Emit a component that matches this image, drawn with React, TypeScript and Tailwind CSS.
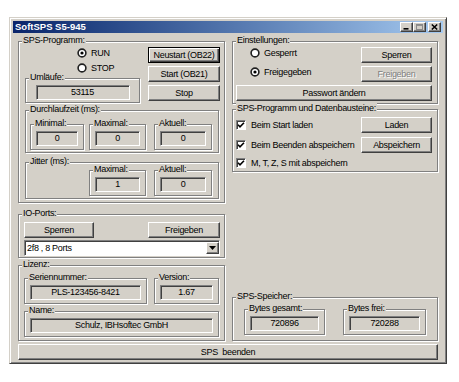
import React from "react";

const raised =
  "border border-t-white border-l-white border-r-[#404040] border-b-[#404040] shadow-[inset_-1px_-1px_0_#808080]";
const sunken =
  "border border-t-[#808080] border-l-[#808080] border-r-white border-b-white shadow-[inset_1px_1px_0_#404040]";

function Group({ label, className, children }: { label: string; className: string; children?: React.ReactNode }) {
  return (
    <div className={"border border-[#808080] shadow-[inset_1px_1px_0_#fff,1px_1px_0_#fff] " + className}>
      <div className="-mt-[7px] ml-[3px] w-fit whitespace-nowrap bg-[#d4d0c8] px-[1px] leading-[11px]">{label}</div>
      {children}
    </div>
  );
}

function Field({ value, className = "" }: { value: string; className?: string }) {
  return <div className={"h-[15px] text-center leading-[13px] " + sunken + " " + className}>{value}</div>;
}

function ValueBox({ label, value, className }: { label: string; value: string; className: string }) {
  return (
    <Group label={label} className={"h-[26px] " + className}>
      <Field value={value} className="mx-[5px] mt-[2px]" />
    </Group>
  );
}

function Btn({
  children,
  className = "",
  def,
  disabled,
}: {
  children: React.ReactNode;
  className?: string;
  def?: boolean;
  disabled?: boolean;
}) {
  const look = def
    ? "border border-black shadow-[inset_1px_1px_0_#fff,inset_-1px_-1px_0_#404040,inset_-2px_-2px_0_#808080]"
    : raised;
  return (
    <div
      className={
        "flex h-[16px] items-center justify-center whitespace-nowrap leading-[11px] " +
        look +
        " " +
        (disabled ? "text-[#808080] [text-shadow:1px_1px_0_#fff] " : "") +
        className
      }
    >
      {children}
    </div>
  );
}

function Radio({ checked, label }: { checked?: boolean; label: string }) {
  return (
    <div className="flex h-[14px] items-center gap-[4px]">
      <svg width="10" height="10" viewBox="0 0 10 10">
        <circle cx="5" cy="5" r="3.9" fill="#fff" stroke="#202020" strokeWidth="1.6" />
        {checked && <circle cx="5" cy="5" r="1.6" fill="#000" />}
      </svg>
      <span className="leading-[11px]">{label}</span>
    </div>
  );
}

function Check({ label, className = "" }: { label: string; className?: string }) {
  return (
    <div className={"flex items-center gap-[5px] " + className}>
      <div className={"flex h-[10px] w-[10px] items-center justify-center bg-white " + sunken}>
        <svg width="8" height="8" viewBox="0 0 8 8">
          <path d="M1 3.8 L3 5.8 L7 1.8" fill="none" stroke="#000" strokeWidth="1.6" />
        </svg>
      </div>
      <span className="whitespace-nowrap leading-[11px]">{label}</span>
    </div>
  );
}

function TitleBtn({ children, className = "" }: { children: React.ReactNode; className?: string }) {
  return (
    <div className={"flex h-[10px] w-[13px] items-center justify-center bg-[#d4d0c8] " + raised + " " + className}>
      {children}
    </div>
  );
}

export default function App() {
  return (
    <div className="h-[382px] w-[459px] bg-white pl-[9px] pt-[17px] font-['Liberation_Sans',Arial,sans-serif] text-[9px] tracking-[-0.3px] text-black">
      <div className="flex h-[347px] w-[438px] flex-col border border-t-[#d4d0c8] border-l-[#d4d0c8] border-r-[#404040] border-b-[#404040] bg-[#d4d0c8] p-[3px] shadow-[inset_1px_1px_0_#fff,inset_-1px_-1px_0_#808080]">
        {/* title bar */}
        <div className="flex h-[12px] items-center justify-between bg-linear-to-r from-[#0a246a] to-[#a6caf0] pl-[2px] pr-[2px]">
          <span className="text-[9.5px] font-bold leading-[12px] tracking-normal text-white">SoftSPS S5-945</span>
          <div className="flex items-center">
            <TitleBtn>
              <svg width="7" height="6" viewBox="0 0 7 6">
                <rect x="0.5" y="4" width="5" height="1.6" fill="#000" />
              </svg>
            </TitleBtn>
            <TitleBtn>
              <svg width="7" height="6" viewBox="0 0 7 6">
                <rect x="0.5" y="0.5" width="6" height="5" fill="none" stroke="#8a8a8a" strokeWidth="1" />
                <rect x="0.5" y="0.5" width="6" height="1.4" fill="#8a8a8a" />
              </svg>
            </TitleBtn>
            <TitleBtn className="ml-[2px]">
              <svg width="7" height="6" viewBox="0 0 7 6">
                <path d="M0.8 0.5 L6.2 5.5 M6.2 0.5 L0.8 5.5" stroke="#000" strokeWidth="1.5" />
              </svg>
            </TitleBtn>
          </div>
        </div>

        <div className="flex flex-1 flex-col px-[5px] pt-[8px]">
          <div className="flex gap-[7px]">
            {/* left column */}
            <div className="flex w-[207px] flex-col">
              <Group label="SPS-Programm:" className="h-[162px]">
                <div className="flex h-[57px] pl-[6px]">
                  <div className="flex w-[115px] flex-col">
                    <div className="pl-[52px]">
                      <Radio checked label="RUN" />
                      <div className="mt-[1px]">
                        <Radio label="STOP" />
                      </div>
                    </div>
                    <Group label="Umläufe:" className="mt-[3px] h-[25px]">
                      <Field value="53115" className="mx-auto mt-[2px] w-[94px]" />
                    </Group>
                  </div>
                  <div className="ml-[8px] flex w-[72px] flex-col gap-[3px] pt-[1px]">
                    <Btn def>Neustart (OB22)</Btn>
                    <Btn>Start (OB21)</Btn>
                    <Btn>Stop</Btn>
                  </div>
                </div>
                <Group label="Durchlaufzeit (ms):" className="ml-[6px] mt-[7px] h-[43px] w-[194px]">
                  <div className="mt-[9px] flex">
                    <ValueBox label="Minimal:" value="0" className="ml-[4px] w-[54px]" />
                    <ValueBox label="Maximal:" value="0" className="ml-[5px] w-[57px]" />
                    <ValueBox label="Aktuell:" value="0" className="ml-[8px] w-[58px]" />
                  </div>
                </Group>
                <Group label="Jitter (ms):" className="ml-[6px] mt-[9px] h-[37px] w-[194px]">
                  <div className="mt-[3px] flex">
                    <ValueBox label="Maximal:" value="1" className="ml-[63px] w-[57px]" />
                    <ValueBox label="Aktuell:" value="0" className="ml-[8px] w-[58px]" />
                  </div>
                </Group>
              </Group>

              <Group label="IO-Ports:" className="mt-[11px] h-[44px]">
                <div className="mt-[3px] flex justify-between pl-[5px] pr-[4px]">
                  <Btn className="w-[70px]">Sperren</Btn>
                  <Btn className="w-[72px]">Freigeben</Btn>
                </div>
                <div className={"ml-[5px] mr-[4px] mt-[2px] flex h-[16px] items-center bg-white " + sunken}>
                  <span className="flex-1 pl-[2px] leading-[11px]">2f8 , 8 Ports</span>
                  <div className={"flex h-[12px] w-[13px] items-center justify-center bg-[#d4d0c8] " + raised}>
                    <svg width="7" height="4" viewBox="0 0 7 4">
                      <path d="M0 0 H7 L3.5 4 Z" fill="#000" />
                    </svg>
                  </div>
                </div>
              </Group>

              <Group label="Lizenz:" className="mt-[7px] h-[76px]">
                <div className="mt-[8px] flex pl-[5px]">
                  <ValueBox label="Seriennummer:" value="PLS-123456-8421" className="w-[123px]" />
                  <ValueBox label="Version:" value="1.67" className="ml-[7px] w-[65px]" />
                </div>
                <ValueBox label="Name:" value="Schulz, IBHsoftec GmbH" className="ml-[5px] mt-[7px] w-[195px]" />
              </Group>
            </div>

            {/* right column */}
            <div className="flex w-[206px] flex-col">
              <Group label="Einstellungen:" className="h-[63px]">
                <div className="flex">
                  <div className="pl-[17px]">
                    <Radio label="Gesperrt" />
                    <div className="mt-[5px]">
                      <Radio checked label="Freigegeben" />
                    </div>
                  </div>
                  <div className="ml-auto mr-[5px] flex w-[71px] flex-col gap-[3px] pt-[1px]">
                    <Btn>Sperren</Btn>
                    <Btn disabled>Freigeben</Btn>
                  </div>
                </div>
                <Btn className="ml-[3px] mr-[5px] mt-[3px]">Passwort ändern</Btn>
              </Group>

              <Group label="SPS-Programm und Datenbausteine:" className="mt-[5px] h-[63px]">
                <div className="mt-[3px] flex h-[16px] items-center pl-[3px]">
                  <Check label="Beim Start laden" />
                  <Btn className="ml-auto mr-[5px] w-[71px]">Laden</Btn>
                </div>
                <div className="mt-[4px] flex h-[16px] items-center pl-[3px]">
                  <Check label="Beim Beenden abspeichern" />
                  <Btn className="ml-auto mr-[5px] w-[71px]">Abspeichern</Btn>
                </div>
                <div className="mt-[2px] flex h-[16px] items-center pl-[3px]">
                  <Check label="M, T, Z, S mit abspeichern" />
                </div>
              </Group>

              <Group label="SPS-Speicher:" className="mt-auto h-[44px]">
                <div className="mt-[7px] flex">
                  <ValueBox label="Bytes gesamt:" value="720896" className="ml-[11px] w-[81px]" />
                  <ValueBox label="Bytes frei:" value="720288" className="ml-[18px] w-[83px]" />
                </div>
              </Group>
            </div>
          </div>

          <Btn className="mt-[3px]">SPS&nbsp;&nbsp;beenden</Btn>
        </div>
      </div>
    </div>
  );
}
